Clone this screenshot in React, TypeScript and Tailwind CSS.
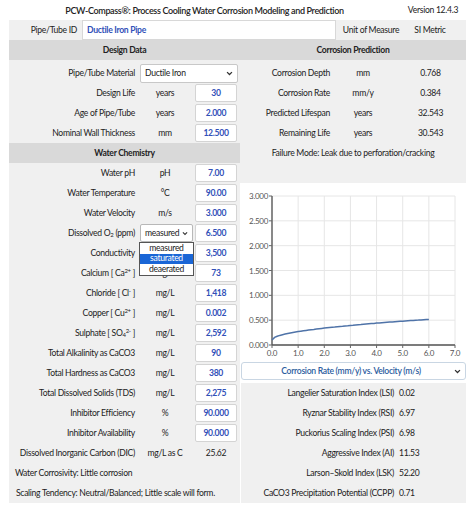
import React from 'react'

const blue = 'text-[#3150b8]'

type Row = { label: React.ReactNode; unit: string; value: string; plain?: boolean }

const designRows: Row[] = [
  { label: 'Design Life', unit: 'years', value: '30' },
  { label: 'Age of Pipe/Tube', unit: 'years', value: '2.000' },
  { label: 'Nominal Wall Thickness', unit: 'mm', value: '12.500' },
]

const chemRows: Row[] = [
  { label: 'Water pH', unit: 'pH', value: '7.00' },
  { label: 'Water Temperature', unit: '°C', value: '90.00' },
  { label: 'Water Velocity', unit: 'm/s', value: '3.000' },
  {
    label: (
      <>
        Dissolved O<sub className="text-[6px]">2</sub> (ppm)
      </>
    ),
    unit: '',
    value: '6.500',
  },
  { label: 'Conductivity', unit: '', value: '3,500' },
  {
    label: (
      <>
        Calcium [ Ca<sup className="text-[6px]">2+</sup> ]
      </>
    ),
    unit: 'mg/L',
    value: '73',
  },
  {
    label: (
      <>
        Chloride [ Cl<sup className="text-[6px]">-</sup> ]
      </>
    ),
    unit: 'mg/L',
    value: '1,418',
  },
  {
    label: (
      <>
        Copper [ Cu<sup className="text-[6px]">2+</sup> ]
      </>
    ),
    unit: 'mg/L',
    value: '0.002',
  },
  {
    label: (
      <>
        Sulphate [ SO<sub className="text-[6px]">4</sub>
        <sup className="text-[6px]">2-</sup> ]
      </>
    ),
    unit: 'mg/L',
    value: '2,592',
  },
  { label: 'Total Alkalinity as CaCO3', unit: 'mg/L', value: '90' },
  { label: 'Total Hardness as CaCO3', unit: 'mg/L', value: '380' },
  { label: 'Total Dissolved Solids (TDS)', unit: 'mg/L', value: '2,275' },
  { label: 'Inhibitor Efficiency', unit: '%', value: '90.000' },
  { label: 'Inhibitor Availability', unit: '%', value: '90.000' },
  { label: 'Dissolved Inorganic Carbon (DIC)', unit: 'mg/L as C', value: '25.62', plain: true },
]

const predRows = [
  ['Corrosion Depth', 'mm', '0.768'],
  ['Corrosion Rate', 'mm/y', '0.384'],
  ['Predicted Lifespan', 'years', '32.543'],
  ['Remaining Life', 'years', '30.543'],
]

const indexRows = [
  ['Langelier Saturation Index (LSI)', '0.02'],
  ['Ryznar Stability Index (RSI)', '6.97'],
  ['Puckorius Scaling Index (PSI)', '6.98'],
  ['Aggressive Index (AI)', '11.53'],
  ['Larson–Skold Index (LSK)', '52.20'],
  ['CaCO3 Precipitation Potential (CCPP)', '0.71'],
]

function Chevron({ className }: { className?: string }) {
  return (
    <svg viewBox="0 0 10 6" className={className} fill="none" stroke="#333" strokeWidth="1.8">
      <path d="M1.5 1l3.5 3.5L8.5 1" />
    </svg>
  )
}

function InputRow({ row }: { row: Row }) {
  return (
    <div className="flex h-[20px] items-center whitespace-nowrap">
      <div className="w-[126px] text-right">{row.label}</div>
      <div className="ml-[5px] w-[50px] text-center">{row.unit}</div>
      {row.plain ? (
        <div className="ml-[5px] w-[42px] text-center">{row.value}</div>
      ) : (
        <div
          className={`ml-[5px] flex h-[18px] w-[42px] items-center justify-center rounded-[2px] border border-[#d4d4d4] bg-white font-bold ${blue}`}
        >
          {row.value}
        </div>
      )}
    </div>
  )
}

function Chart() {
  const x0 = 32
  const x1 = 215
  const yTop = 13
  const yBot = 162
  const sx = (x1 - x0) / 7
  const sy = (yBot - yTop) / 3
  const pts: string[] = []
  for (let i = 0; i <= 60; i++) {
    const v = i / 10
    const r = 0.1 + 0.17 * Math.sqrt(v)
    pts.push(`${(x0 + v * sx).toFixed(1)},${(yBot - r * sy).toFixed(1)}`)
  }
  const yTicks = [0, 0.5, 1, 1.5, 2, 2.5, 3]
  const xTicks = [0, 1, 2, 3, 4, 5, 6, 7]
  return (
    <svg width="226" height="177" className="block">
      {xTicks.map((t) => (
        <line key={'gx' + t} x1={x0 + t * sx} x2={x0 + t * sx} y1={yTop} y2={yBot} stroke="#e6e6e6" />
      ))}
      {yTicks.map((t) => (
        <line key={'gy' + t} x1={x0} x2={x1} y1={yBot - t * sy} y2={yBot - t * sy} stroke="#e6e6e6" />
      ))}
      <line x1={x0} x2={x0} y1={yTop} y2={yBot} stroke="#666" strokeWidth="1.5" />
      <line x1={x0} x2={x1} y1={yBot} y2={yBot} stroke="#555" strokeWidth="1.5" />
      {yTicks.map((t) => (
        <g key={'ly' + t}>
          <line x1={x0 - 3} x2={x0} y1={yBot - t * sy} y2={yBot - t * sy} stroke="#666" />
          <text x={x0 - 4} y={yBot - t * sy + 3} textAnchor="end" fontSize="8" fill="#555" letterSpacing="-0.3">
            {t.toFixed(3)}
          </text>
        </g>
      ))}
      {xTicks.map((t) => (
        <g key={'lx' + t}>
          <line x1={x0 + t * sx} x2={x0 + t * sx} y1={yBot} y2={yBot + 3} stroke="#666" />
          <text x={x0 + t * sx} y={yBot + 11} textAnchor="middle" fontSize="8" fill="#555">
            {t.toFixed(1)}
          </text>
        </g>
      ))}
      <polyline points={pts.join(' ')} fill="none" stroke="#4f73a8" strokeWidth="1.5" />
    </svg>
  )
}

export default function App() {
  return (
    <div className="relative h-[506px] w-[474px] bg-white font-['Lato',sans-serif] text-[8.6px] leading-none tracking-[-0.3px] whitespace-nowrap text-[#222]">
      <div className="ml-[9px] flex h-[20px] w-[457px] items-center">
        <div className="w-[391px] text-center text-[9px] font-semibold tracking-[-0.35px]">
          PCW-Compass®: Process Cooling Water Corrosion Modeling and Prediction
        </div>
        <div className="w-[66px] text-center">Version 12.4.3</div>
      </div>

      <div className="ml-[9px] w-[457px]">
        <div className="flex h-[20px] items-center bg-[#f0f0f0]">
          <div className="w-[68px] text-right">Pipe/Tube ID</div>
          <div className={`ml-[5px] flex h-[20px] w-[254px] items-center border border-[#d8d8d8] bg-white pl-[4px] font-bold ${blue}`}>
            Ductile Iron Pipe
          </div>
          <div className="w-[70px] text-center">Unit of Measure</div>
          <div className="w-[48px] text-center">SI Metric</div>
        </div>

        <div className="flex">
          <div className="w-[231px] bg-[#f0f0f0]">
            <div className="flex h-[20px] items-center justify-center bg-[#d9d9d9] font-bold">Design Data</div>
            <div className="h-[3px]" />
            <div className="flex h-[20px] items-center">
              <div className="w-[126px] text-right">Pipe/Tube Material</div>
              <div className="ml-[5px] flex h-[19px] w-[98px] items-center justify-between rounded-[2px] border border-[#c8c8c8] bg-white px-[4px]">
                <span>Ductile Iron</span>
                <Chevron className="h-[5px] w-[7px]" />
              </div>
            </div>
            {designRows.map((r, i) => (
              <InputRow key={i} row={r} />
            ))}
            <div className="flex h-[20px] items-center justify-center bg-[#d9d9d9] font-bold">Water Chemistry</div>
            {chemRows.map((r, i) => (
              <InputRow key={i} row={r} />
            ))}
            <div className="flex h-[20px] items-center pl-[6px]">Water Corrosivity: Little corrosion</div>
            <div className="flex h-[20px] items-center pl-[7px]">
              Scaling Tendency: Neutral/Balanced; Little scale will form.
            </div>
          </div>

          <div className="w-[226px]">
            <div className="flex h-[20px] items-center justify-center bg-[#d9d9d9] font-bold">
              Corrosion Prediction
            </div>
            <div className="bg-[#f0f0f0] pt-[3px]">
              {predRows.map(([l, u, v]) => (
                <div key={l} className="flex h-[20px] items-center">
                  <div className="w-[90px] text-right">{l}</div>
                  <div className="ml-[5px] w-[56px] text-center">{u}</div>
                  <div className="ml-[4px] w-[71px] text-center">{v}</div>
                </div>
              ))}
              <div className="h-[40px] pt-[6px] text-center">Failure Mode: Leak due to perforation/cracking</div>
            </div>
            <Chart />
            <div className="mt-[2px] ml-[1px] flex h-[18px] items-center justify-center rounded-[3px] border border-[#c9d6e3] bg-white">
              <span className="flex-1 pl-[6px] text-center font-semibold text-[#2b5c9e]">
                Corrosion Rate (mm/y) vs. Velocity (m/s)
              </span>
              <Chevron className="mr-[4px] h-[5px] w-[7px]" />
            </div>
            <div className="mt-[3px] ml-[1px] bg-[#f0f0f0]">
              {indexRows.map(([l, v]) => (
                <div key={l} className="flex h-[20px] items-center">
                  <div className="w-[153px] text-right">{l}</div>
                  <div className="ml-[5px]">{v}</div>
                </div>
              ))}
            </div>
          </div>
        </div>
      </div>

      <div className="absolute top-[224px] left-[140px] flex h-[18px] w-[53px] items-center justify-between rounded-[2px] border border-[#b8b8b8] bg-white px-[4px]">
        <span>measured</span>
        <Chevron className="h-[5px] w-[6px]" />
      </div>
      <div className="absolute top-[242px] left-[139px] w-[55px] border border-[#555] bg-white">
        <div className="flex h-[10.5px] items-center justify-center">measured</div>
        <div className="flex h-[10.5px] items-center justify-center bg-[#1a66d6] text-white">saturated</div>
        <div className="flex h-[10.5px] items-center justify-center">deaerated</div>
      </div>
    </div>
  )
}
